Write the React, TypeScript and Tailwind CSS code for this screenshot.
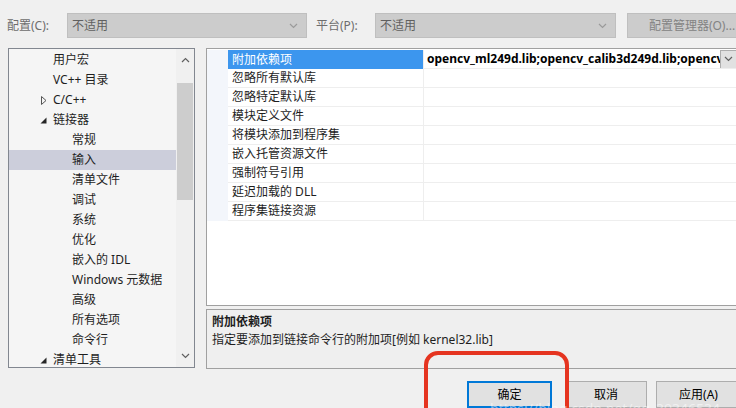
import React from "react";

const FONT = { fontFamily: '"Noto Sans", "Noto Sans CJK SC", sans-serif' };

function Chevron({ dir = "down", color = "#9a9a9a" }: { dir?: "down" | "up"; color?: string }) {
  return (
    <svg width="9" height="6" viewBox="0 0 9 6">
      <path
        d={dir === "down" ? "M1 1 L4.5 4.5 L8 1" : "M1 5 L4.5 1.5 L8 5"}
        fill="none"
        stroke={color}
        strokeWidth="1.2"
      />
    </svg>
  );
}

function Combo({ w }: { w: string }) {
  return (
    <div className={`${w} shrink-0 h-[25px] bg-[#cccccc] border border-[#bfbfbf] flex items-center justify-between pl-[4px] pr-[8px] text-[#5f5f5f] text-[12px]`}>
      <span>不适用</span>
      <Chevron />
    </div>
  );
}

type TreeItem = { label: string; level: 1 | 2; arrow?: "open" | "closed"; selected?: boolean };

const tree: TreeItem[] = [
  { label: "用户宏", level: 1 },
  { label: "VC++ 目录", level: 1 },
  { label: "C/C++", level: 1, arrow: "closed" },
  { label: "链接器", level: 1, arrow: "open" },
  { label: "常规", level: 2 },
  { label: "输入", level: 2, selected: true },
  { label: "清单文件", level: 2 },
  { label: "调试", level: 2 },
  { label: "系统", level: 2 },
  { label: "优化", level: 2 },
  { label: "嵌入的 IDL", level: 2 },
  { label: "Windows 元数据", level: 2 },
  { label: "高级", level: 2 },
  { label: "所有选项", level: 2 },
  { label: "命令行", level: 2 },
  { label: "清单工具", level: 1, arrow: "open" },
];

const props = [
  "附加依赖项",
  "忽略所有默认库",
  "忽略特定默认库",
  "模块定义文件",
  "将模块添加到程序集",
  "嵌入托管资源文件",
  "强制符号引用",
  "延迟加载的 DLL",
  "程序集链接资源",
];

export default function App() {
  return (
    <div className="relative w-[736px] h-[408px] overflow-hidden bg-[#f0f0f0] text-[12px] text-[#1e1e1e]" style={FONT}>
      {/* top row */}
      <div className="flex items-center mt-[13px] ml-[7px]">
        <div className="w-[60px] shrink-0 text-[#6d6d6d]">配置(C):</div>
        <Combo w="w-[240px]" />
        <div className="ml-[9px] w-[59px] shrink-0 text-[#6d6d6d]">平台(P):</div>
        <Combo w="w-[241px]" />
        <div className="ml-[11px] w-[130px] shrink-0 h-[25px] bg-[#cccccc] border border-[#bfbfbf] flex items-center justify-center text-[#838383] whitespace-nowrap">
          配置管理器(O)...
        </div>
      </div>

      {/* main */}
      <div className="flex mt-[10px] ml-[8px] gap-[11px]">
        {/* tree */}
        <div className="w-[187px] shrink-0 h-[320px] border border-[#828790] bg-[#f5f5f5] flex">
          <div className="flex-1 pt-[1px]">
            {tree.map((t) => (
              <div
                key={t.label}
                className={`h-[20px] flex items-center ${t.selected ? "bg-[#cccedb]" : ""}`}
              >
                <div className="w-[44px] flex justify-end pr-[6px] items-center">
                  {t.arrow === "closed" && (
                    <svg width="6" height="9" viewBox="0 0 6 9">
                      <path d="M0.5 0.5 L5 4.5 L0.5 8.5 Z" fill="none" stroke="#555" strokeWidth="1" />
                    </svg>
                  )}
                  {t.arrow === "open" && (
                    <svg width="7" height="7" viewBox="0 0 7 7">
                      <path d="M6.5 0.5 L6.5 6.5 L0.5 6.5 Z" fill="#262626" />
                    </svg>
                  )}
                </div>
                <span className={t.level === 2 ? "pl-[19px]" : ""}>{t.label}</span>
              </div>
            ))}
          </div>
          <div className="w-[18px] bg-[#f0f0f0] flex flex-col items-center">
            <div className="h-[22px] flex items-center justify-center">
              <Chevron dir="up" color="#606060" />
            </div>
            <div className="mt-[12px] w-[16px] h-[117px] bg-[#cdcdcd]" />
            <div className="flex-1" />
            <div className="h-[22px] flex items-center justify-center">
              <Chevron dir="down" color="#606060" />
            </div>
          </div>
        </div>

        {/* right column */}
        <div className="w-[540px] shrink-0 flex flex-col gap-[3px]">
          <div className="h-[258px] border border-[#a0a0a0] bg-white pt-[1px]">
            {props.map((p, i) => (
              <div key={p} className="h-[19px] flex">
                <div className="w-[21px] bg-[#f3f6fb]" />
                <div
                  className={`w-[196px] pl-[4px] flex items-center border-r border-[#eeeeee] ${
                    i === 0 ? "bg-[#3c96ee] text-white" : "border-b"
                  }`}
                >
                  {p}
                </div>
                <div className="flex-1 flex items-center border-b border-[#eeeeee] overflow-hidden">
                  {i === 0 && (
                    <>
                      <div className="w-[296px] pl-[3px] font-bold text-black whitespace-nowrap overflow-hidden">
                        opencv_ml249d.lib;opencv_calib3d249d.lib;opencv_video249d.lib
                      </div>
                      <div className="w-[17px] h-[19px] bg-[#e1e1e1] border border-[#adadad] flex items-center justify-center">
                        <Chevron color="#606060" />
                      </div>
                    </>
                  )}
                </div>
              </div>
            ))}
          </div>
          <div className="h-[60px] border border-[#a0a0a0] bg-[#efefef] pl-[5px] pt-[3px] leading-[18px]">
            <div className="font-bold">附加依赖项</div>
            <div>指定要添加到链接命令行的附加项[例如 kernel32.lib]</div>
          </div>
        </div>
      </div>

      {/* buttons */}
      <div className="flex mt-[12px] ml-[467px]">
        <div className="w-[85px] shrink-0 h-[27px] bg-[#e1e1e1] border-2 border-[#0078d7] flex items-center justify-center text-black">
          确定
        </div>
        <div className="ml-[13px] w-[82px] shrink-0 h-[27px] bg-[#e1e1e1] border border-[#adadad] flex items-center justify-center text-black">
          取消
        </div>
        <div className="ml-[9px] w-[85px] shrink-0 h-[27px] bg-[#e1e1e1] border border-[#adadad] flex items-center justify-center text-black">
          应用(A)
        </div>
      </div>

      {/* red annotation */}
      <div className="absolute left-[424px] top-[351px] w-[145px] h-[80px] border-[4px] border-[#e53420] rounded-[14px]" />
      {/* watermark */}
      <div className="absolute left-[490px] top-[398px] text-[14px] text-white/50 whitespace-nowrap">
        https://blog.csdn.net/qq_39346534
      </div>
    </div>
  );
}
